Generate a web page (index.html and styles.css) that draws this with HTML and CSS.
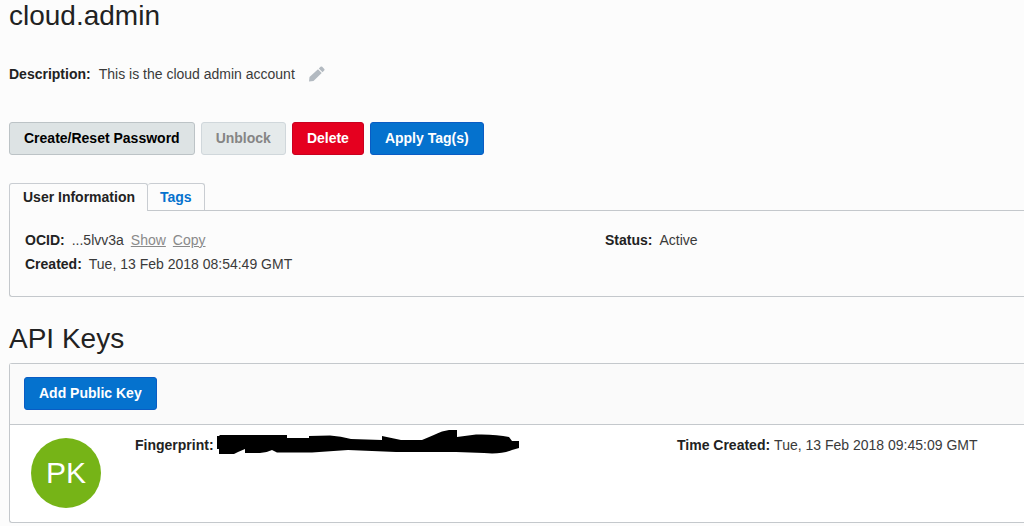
FILE: index.html
```html
<!DOCTYPE html>
<html lang="en">
<head>
<meta charset="utf-8">
<meta name="viewport" content="width=device-width, initial-scale=1">
<title>cloud.admin</title>
<link rel="stylesheet" href="styles.css">
</head>
<body>
<main class="page">
  <h1 class="title">cloud.admin</h1>
  <div class="description">
    <b class="label">Description:</b>
    <span>This is the cloud admin account</span>
    <button class="edit" type="button" aria-label="Edit description">
      <svg width="16" height="16" viewBox="0 0 16 16" fill="#b3bac1" aria-hidden="true">
        <path d="M0 15.500L.5 11L9 3.200L12.700 7L4.500 15ZM9.800 2.400L11.500.8Q12.300 0 13.200.8L15.300 2.900Q16 3.800 15.200 4.600L13.500 6.200Z"/>
      </svg>
    </button>
  </div>

  <div class="actions">
    <button class="btn" type="button">Create/Reset Password</button>
    <button class="btn" type="button" disabled>Unblock</button>
    <button class="btn btn-danger" type="button">Delete</button>
    <button class="btn btn-primary" type="button">Apply Tag(s)</button>
  </div>

  <div class="tabs" role="tablist">
    <button class="tab tab-active" type="button" role="tab" aria-selected="true">User Information</button>
    <button class="tab" type="button" role="tab" aria-selected="false">Tags</button>
  </div>
  <section class="info">
    <div>
      <div class="field"><b class="label">OCID:</b><span>...5lvv3a</span><a href="#show">Show</a><a href="#copy">Copy</a></div>
      <div class="field"><b class="label">Created:</b><span>Tue, 13 Feb 2018 08:54:49 GMT</span></div>
    </div>
    <div>
      <div class="field"><b class="label">Status:</b><span>Active</span></div>
    </div>
  </section>

  <h2 class="title section-title">API Keys</h2>
  <section class="keys">
    <div class="keys-bar">
      <button class="btn btn-primary" type="button">Add Public Key</button>
    </div>
    <div class="key">
      <div class="avatar">PK</div>
      <div class="key-fields">
        <div class="field field-tight">
          <b class="label">Fingerprint:</b>
          <svg class="redacted" width="304" height="24" viewBox="2 5 304 24" role="img" aria-label="Redacted">
            <path d="M1 8L3 8L4 7L14 7H71V10H93V8L114 7.500Q125 8 135 11L166 12V8L185 12L206 12Q218 7 226 3.500L233 2H241V9L260 6.500Q280 6 293 9L296 13H303V20L296 22Q285 26.500 268 25L240 24L180 24L132 22L96 24.500H61L56 22Q50 25 44 25H29V21L22 24L18 26H3V21L1 21Z"/>
          </svg>
        </div>
        <div class="field field-tight"><b class="label">Time Created:</b><span>Tue, 13 Feb 2018 09:45:09 GMT</span></div>
      </div>
    </div>
  </section>
</main>
</body>
</html>
```
FILE: styles.css
```css
* {
  box-sizing: border-box;
}

body {
  margin: 0;
  background: #fcfcfc;
  color: #3a3a3a;
  font: 14px/20px "Liberation Sans", Arial, sans-serif;
}

.page {
  padding-left: 9px;
}

.title {
  margin: 0;
  color: #222;
  font-size: 28px;
  font-weight: 400;
  line-height: 32px;
}

.label {
  color: #222;
}

.description {
  display: flex;
  align-items: center;
  gap: 8px;
  margin-top: 32px;
}

.edit {
  display: flex;
  margin-left: 6px;
  padding: 0;
  border: 0;
  background: none;
}

.actions {
  display: flex;
  gap: 6px;
  margin-top: 38px;
}

.btn {
  padding: 5px 14px 6px;
  border: 1px solid #bcc3c6;
  border-radius: 3px;
  background: #dde3e4;
  color: #000;
  font: bold 14px/20px "Liberation Sans", Arial, sans-serif;
}

.btn:disabled {
  border-color: #d0d7db;
  background: #e5eaeb;
  color: #858585;
}

.btn-danger {
  border-color: #c9001f;
  background: #e5001f;
  color: #fff;
}

.btn-primary {
  border-color: #0a5cc4;
  background: #0572ce;
  color: #fff;
}

.tabs {
  display: flex;
  margin-top: 28px;
}

.tab {
  padding: 3px 12px;
  border: 1px solid #c9cdd2;
  border-left: 0;
  border-bottom: 0;
  border-radius: 3px 3px 0 0;
  background: #fcfcfc;
  color: #0572ce;
  font: bold 14px/20px "Liberation Sans", Arial, sans-serif;
}

.tab-active {
  z-index: 1;
  margin-bottom: -1px;
  padding-bottom: 4px;
  padding-left: 13px;
  border-left: 1px solid #c9cdd2;
  color: #222;
}

.info {
  display: grid;
  grid-template-columns: 580fr 419fr;
  padding: 17px 0 20px 15px;
  border: 1px solid #c4c8cc;
  border-right: 0;
  border-radius: 0 0 0 3px;
}

.field {
  display: flex;
  gap: 7px;
  line-height: 24px;
}

.field-tight {
  gap: 4px;
}

.field a {
  color: #8a8a8a;
}

.section-title {
  margin-top: 26px;
}

.keys {
  margin-top: 8px;
  border: 1px solid #c4c8cc;
  border-right: 0;
  border-radius: 3px 0 0 3px;
  background: #fff;
}

.keys-bar {
  padding: 13px 14px 14px;
  border-bottom: 1px solid #c4c8cc;
  background: #fafafa;
}

.key {
  display: flex;
  gap: 34px;
  padding: 8px 0 14px 21px;
}

.avatar {
  flex: none;
  width: 70px;
  height: 70px;
  margin-top: 5px;
  border-radius: 50%;
  background: #76b417;
  color: #fff;
  font-size: 30px;
  line-height: 70px;
  text-align: center;
}

.key-fields {
  flex: 1;
  display: grid;
  grid-template-columns: 542fr 347fr;
}

.redacted {
  overflow: visible;
  fill: #000;
}
```
